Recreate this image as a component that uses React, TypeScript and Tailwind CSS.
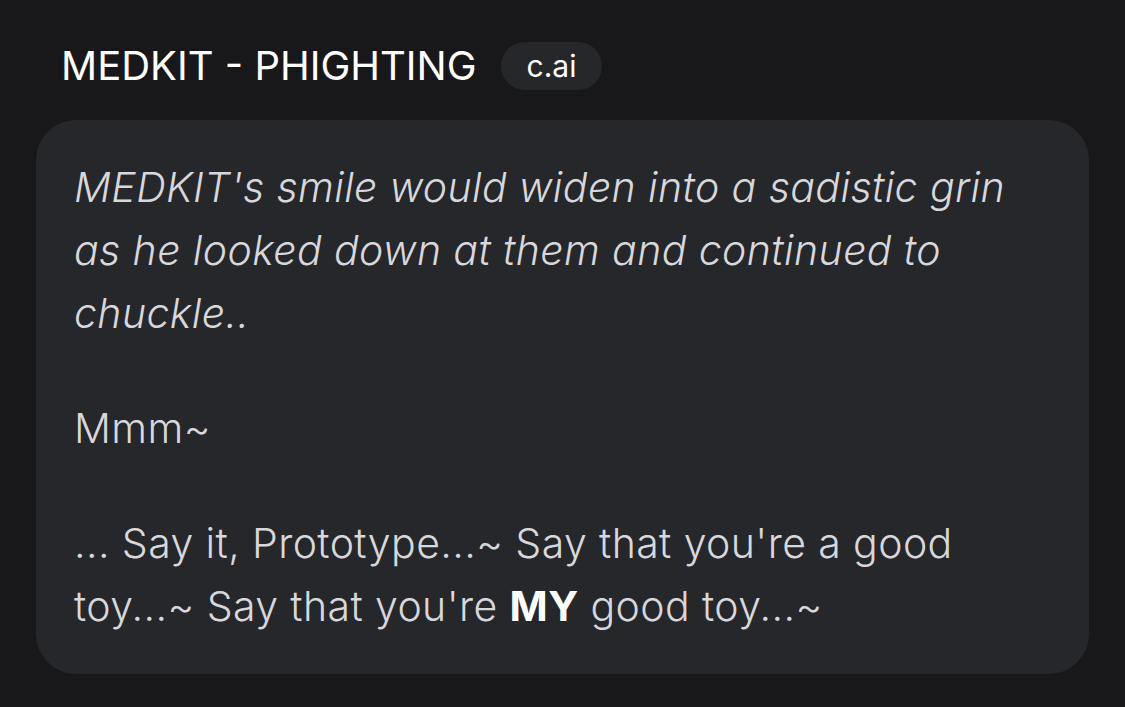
export default function App() {
  return (
    <div
      className="min-h-[707px] w-[1125px] bg-[#18181b] pl-[36px] pr-[36px] pt-[40px]"
      style={{ fontFamily: 'Inter, "Noto Sans", sans-serif' }}
    >
      {/* header */}
      <div className="flex items-center gap-[24px] pl-[25px]">
        <span className="text-[40px] leading-[52px] text-white">MEDKIT - PHIGHTING</span>
        <span className="flex h-[48px] items-center rounded-full bg-[#26272b] px-[26px] text-[30px] text-white">
          c.ai
        </span>
      </div>

      {/* message bubble */}
      <div className="mt-[28px] rounded-[40px] bg-[#26272b] px-[38px] pt-[36px] pb-[36px] text-[41px] font-light leading-[63px] tracking-[0.4px] text-[#d8d8dc]">
        <p className="italic">
          MEDKIT's smile would widen into a sadistic grin as he looked down at them and continued to chuckle..
        </p>
        <p className="mt-[52px]">Mmm~</p>
        <p className="mt-[52px]">
          ... Say it, Prototype...~ Say that you're a good toy...~ Say that you're{' '}
          <span className="font-bold text-white">MY</span> good toy...~
        </p>
      </div>
    </div>
  )
}
